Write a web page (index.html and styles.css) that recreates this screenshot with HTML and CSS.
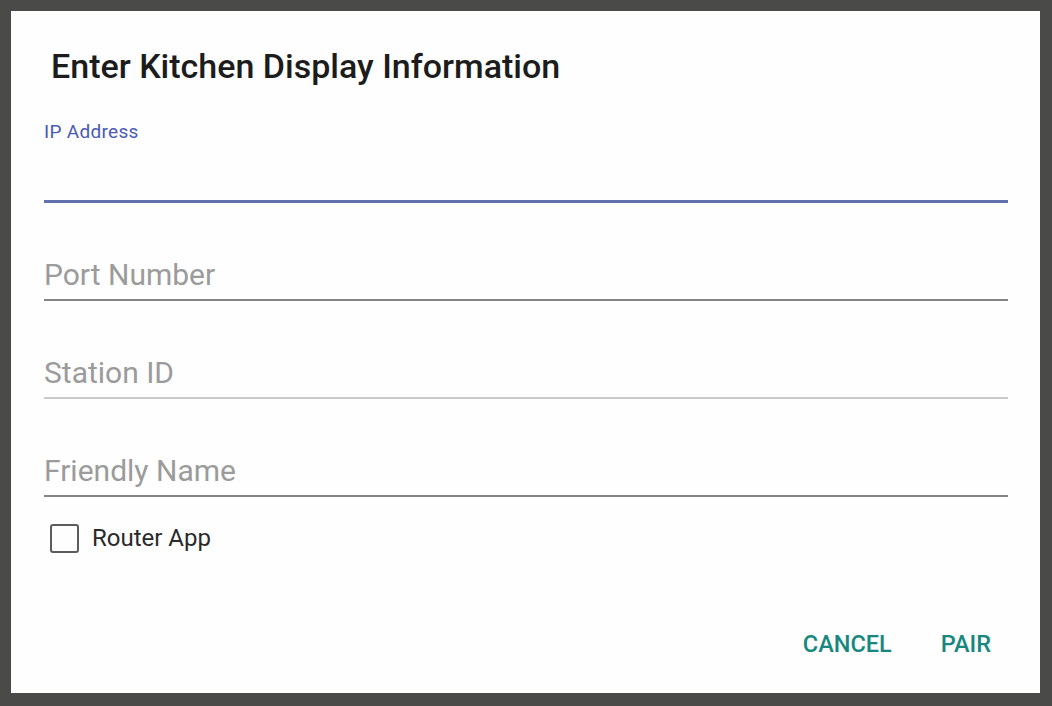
FILE: index.html
```html
<!DOCTYPE html>
<html lang="en">
<head>
<meta charset="utf-8">
<title>Enter Kitchen Display Information</title>
<link rel="stylesheet" href="styles.css">
</head>
<body>
<div class="dialog">
  <h1 class="title">Enter Kitchen Display Information</h1>
  <div class="field field-active">
    <label class="float-label">IP Address</label>
    <div class="input-area"></div>
  </div>
  <div class="field">
    <span class="placeholder">Port Number</span>
  </div>
  <div class="field field-light">
    <span class="placeholder">Station ID</span>
  </div>
  <div class="field">
    <span class="placeholder">Friendly Name</span>
  </div>
  <div class="check-row">
    <span class="checkbox"></span>
    <span class="check-label">Router App</span>
  </div>
  <div class="actions">
    <span class="btn">CANCEL</span>
    <span class="btn">PAIR</span>
  </div>
</div>
</body>
</html>
```

FILE: styles.css
```css
html, body {
  height: 100%;
}
body {
  margin: 0;
  box-sizing: border-box;
  padding: 11px 12px 13px 11px;
  background: #4a4a48;
  display: flex;
  font-family: Roboto, "Liberation Sans", sans-serif;
}
.dialog {
  flex: 1;
  background: #fdfefd;
  display: flex;
  flex-direction: column;
  padding: 36px 32px 35px 33px;
  box-sizing: border-box;
}
.title {
  margin: 0 0 0 7px;
  font-size: 34px;
  line-height: 38px;
  font-weight: 500;
  color: #1c1c1c;
}
.field {
  display: flex;
  flex-direction: column;
  padding: 57px 0 9px;
  border-bottom: 2px solid #858585;
}
.field-light {
  border-bottom-color: #c9c9c9;
}
.field-active {
  padding: 37px 0 0;
  border-bottom: 3px solid #6370ae;
}
.float-label {
  font-size: 19px;
  line-height: 20px;
  letter-spacing: 0.3px;
  color: #4a5bb5;
}
.input-area {
  height: 58px;
}
.placeholder {
  font-size: 30px;
  line-height: 30px;
  color: #9b9b9b;
}
.check-row {
  display: flex;
  align-items: center;
  margin-top: 27px;
  margin-left: 6px;
  gap: 13px;
}
.checkbox {
  width: 29px;
  height: 29px;
  box-sizing: border-box;
  border: 2px solid #5c5c5c;
  border-radius: 3px;
}
.check-label {
  font-size: 24px;
  line-height: 29px;
  color: #2a2a2a;
}
.actions {
  margin-top: auto;
  display: flex;
  justify-content: flex-end;
  gap: 49px;
  padding-right: 17px;
}
.btn {
  font-size: 23.5px;
  line-height: 28px;
  font-weight: 500;
  color: #17877f;
}
```
